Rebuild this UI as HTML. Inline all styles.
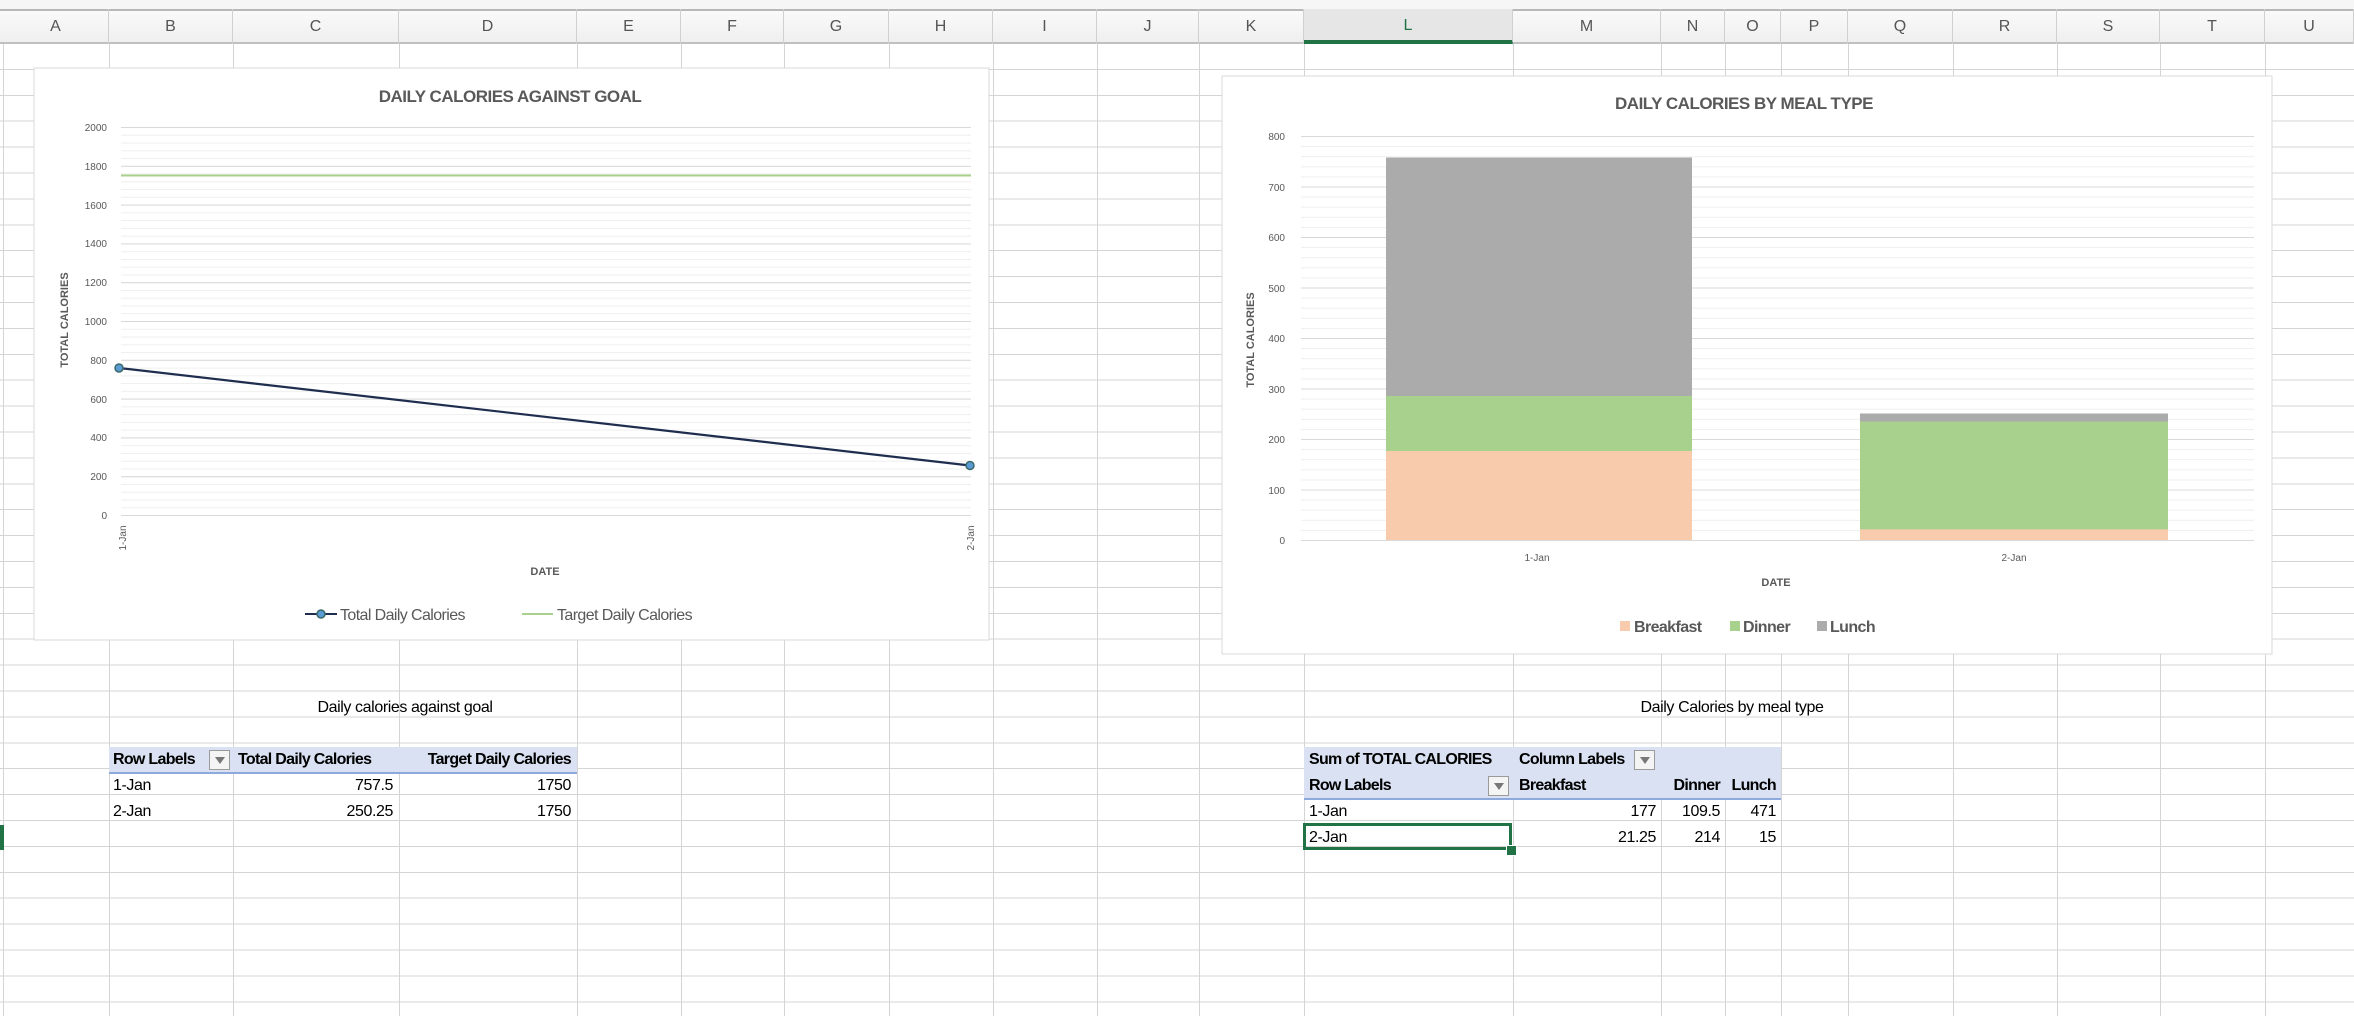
<!DOCTYPE html>
<html><head><meta charset="utf-8"><style>
body{margin:0;width:2354px;height:1016px;overflow:hidden;background:#fff;font-family:"Liberation Sans",sans-serif;position:relative}
.a{position:absolute}
.grid{left:0;top:44px;width:2354px;height:972px;background:repeating-linear-gradient(to bottom,transparent 0,transparent 24.9px,#d4d4d4 24.9px,#d4d4d4 25.9px)}
.vl{position:absolute;top:44px;width:1px;height:972px;background:#d4d4d4}
.hdr{left:0;top:9px;width:2354px;height:35px;background:linear-gradient(#fafafa,#efefef);border-top:2px solid #b8b8b8;border-bottom:2px solid #c0c0c0;box-sizing:border-box}
.ch{position:absolute;top:9px;height:35px;line-height:35px;text-align:center;font-size:16px;color:#555;border-right:1px solid #d0d0d0;box-sizing:border-box}
.c{position:absolute;font-size:16px;letter-spacing:-0.4px;color:#000;height:26px;line-height:26px;white-space:nowrap}
.b{font-weight:bold;letter-spacing:-0.7px}
.r{text-align:right}
.dd{position:absolute;width:21px;height:20px;border:1px solid #9a9a9a;background:#f4f4f4;box-sizing:border-box}
.dd:after{content:"";position:absolute;left:5px;top:6px;border-left:5px solid transparent;border-right:5px solid transparent;border-top:7px solid #777}
</style></head><body>
<div class="a" style="left:0;top:0;width:2354px;height:9px;background:#f6f6f6"></div>
<div class="a hdr"></div>
<div class="ch" style="left:3px;width:106px">A</div>
<div class="ch" style="left:109px;width:124px">B</div>
<div class="ch" style="left:233px;width:166px">C</div>
<div class="ch" style="left:399px;width:178px">D</div>
<div class="ch" style="left:577px;width:104px">E</div>
<div class="ch" style="left:681px;width:103px">F</div>
<div class="ch" style="left:784px;width:105px">G</div>
<div class="ch" style="left:889px;width:104px">H</div>
<div class="ch" style="left:993px;width:104px">I</div>
<div class="ch" style="left:1097px;width:102px">J</div>
<div class="ch" style="left:1199px;width:105px">K</div>
<div class="ch" style="left:1304px;width:209px;background:#e6e6e6;color:#217346;border-bottom:4px solid #217346;line-height:33px">L</div>
<div class="ch" style="left:1513px;width:148px">M</div>
<div class="ch" style="left:1661px;width:64px">N</div>
<div class="ch" style="left:1725px;width:56px">O</div>
<div class="ch" style="left:1781px;width:67px">P</div>
<div class="ch" style="left:1848px;width:105px">Q</div>
<div class="ch" style="left:1953px;width:104px">R</div>
<div class="ch" style="left:2057px;width:103px">S</div>
<div class="ch" style="left:2160px;width:105px">T</div>
<div class="ch" style="left:2265px;width:89px">U</div>
<div class="a grid"></div>
<div class="vl" style="left:3px"></div><div class="vl" style="left:109px"></div><div class="vl" style="left:233px"></div><div class="vl" style="left:399px"></div><div class="vl" style="left:577px"></div><div class="vl" style="left:681px"></div><div class="vl" style="left:784px"></div><div class="vl" style="left:889px"></div><div class="vl" style="left:993px"></div><div class="vl" style="left:1097px"></div><div class="vl" style="left:1199px"></div><div class="vl" style="left:1304px"></div><div class="vl" style="left:1513px"></div><div class="vl" style="left:1661px"></div><div class="vl" style="left:1725px"></div><div class="vl" style="left:1781px"></div><div class="vl" style="left:1848px"></div><div class="vl" style="left:1953px"></div><div class="vl" style="left:2057px"></div><div class="vl" style="left:2160px"></div><div class="vl" style="left:2265px"></div>
<div class="a" style="left:0;top:825px;width:4px;height:25px;background:#217346"></div>

<svg class="a" style="left:0;top:0" width="2354" height="1016" font-family="Liberation Sans, sans-serif">
<defs>
<pattern id="m1" x="0" y="127" width="10" height="7.76" patternUnits="userSpaceOnUse"><rect width="10" height="1" fill="#efefef"/></pattern>
<pattern id="M1" x="0" y="127" width="10" height="38.8" patternUnits="userSpaceOnUse"><rect width="10" height="1" fill="#d9d9d9"/></pattern>
<pattern id="m2" x="0" y="136" width="10" height="10.1" patternUnits="userSpaceOnUse"><rect width="10" height="1" fill="#efefef"/></pattern>
<pattern id="M2" x="0" y="136" width="10" height="50.5" patternUnits="userSpaceOnUse"><rect width="10" height="1" fill="#d9d9d9"/></pattern>
</defs>
<rect x="34" y="68" width="955" height="572" fill="#fff" stroke="#d9d9d9"/>
<text x="510" y="102" text-anchor="middle" font-size="17" font-weight="bold" fill="#595959" letter-spacing="-0.5">DAILY CALORIES AGAINST GOAL</text>
<rect x="121" y="127" width="850" height="389" fill="url(#m1)"/>
<rect x="121" y="127" width="850" height="389" fill="url(#M1)"/>
<g font-size="10" fill="#595959" text-anchor="end">
<text x="107" y="131">2000</text><text x="107" y="170">1800</text><text x="107" y="209">1600</text><text x="107" y="247">1400</text><text x="107" y="286">1200</text><text x="107" y="325">1000</text><text x="107" y="364">800</text><text x="107" y="403">600</text><text x="107" y="441">400</text><text x="107" y="480">200</text><text x="107" y="519">0</text>
</g>
<text transform="translate(68,320) rotate(-90)" text-anchor="middle" font-size="11" font-weight="bold" fill="#595959">TOTAL CALORIES</text>
<line x1="121" y1="175.5" x2="971" y2="175.5" stroke="#a9d18e" stroke-width="2"/>
<line x1="119" y1="368" x2="970" y2="465.5" stroke="#1f2d4e" stroke-width="2.2"/>
<circle cx="119" cy="368" r="4" fill="#5b9bd5" stroke="#3a6a6a" stroke-width="1.5"/>
<circle cx="970" cy="465.5" r="4" fill="#5b9bd5" stroke="#3a6a6a" stroke-width="1.5"/>
<text transform="translate(126,538) rotate(-90)" text-anchor="middle" font-size="10" fill="#595959">1-Jan</text>
<text transform="translate(974,538) rotate(-90)" text-anchor="middle" font-size="10" fill="#595959">2-Jan</text>
<text x="545" y="575" text-anchor="middle" font-size="11" font-weight="bold" fill="#595959">DATE</text>
<line x1="305" y1="614" x2="337" y2="614" stroke="#1f2d4e" stroke-width="2"/>
<circle cx="321" cy="614" r="4" fill="#5b9bd5" stroke="#3a6a6a" stroke-width="1.5"/>
<text x="340" y="620" font-size="16" fill="#595959" letter-spacing="-0.6">Total Daily Calories</text>
<line x1="522" y1="614" x2="553" y2="614" stroke="#a9d18e" stroke-width="2"/>
<text x="557" y="620" font-size="16" fill="#595959" letter-spacing="-0.6">Target Daily Calories</text>
<rect x="1222" y="76" width="1050" height="578" fill="#fff" stroke="#d9d9d9"/>
<text x="1744" y="109" text-anchor="middle" font-size="17" font-weight="bold" fill="#595959" letter-spacing="-0.5">DAILY CALORIES BY MEAL TYPE</text>
<rect x="1301" y="136" width="953" height="405" fill="url(#m2)"/>
<rect x="1301" y="136" width="953" height="405" fill="url(#M2)"/>
<g font-size="10" fill="#595959" text-anchor="end">
<text x="1285" y="140">800</text><text x="1285" y="191">700</text><text x="1285" y="241">600</text><text x="1285" y="292">500</text><text x="1285" y="342">400</text><text x="1285" y="393">300</text><text x="1285" y="443">200</text><text x="1285" y="494">100</text><text x="1285" y="544">0</text>
</g>
<text transform="translate(1254,340) rotate(-90)" text-anchor="middle" font-size="11" font-weight="bold" fill="#595959">TOTAL CALORIES</text>
<rect x="1386" y="157.5" width="306" height="238.5" fill="#ababab"/>
<rect x="1386" y="396" width="306" height="55" fill="#a9d18e"/>
<rect x="1386" y="451" width="306" height="89" fill="#f8cbad"/>
<rect x="1860" y="413.5" width="308" height="8" fill="#ababab"/>
<rect x="1860" y="421.5" width="308" height="108" fill="#a9d18e"/>
<rect x="1860" y="529.3" width="308" height="10.7" fill="#f8cbad"/>
<text x="1537" y="561" text-anchor="middle" font-size="10" fill="#595959">1-Jan</text>
<text x="2014" y="561" text-anchor="middle" font-size="10" fill="#595959">2-Jan</text>
<text x="1776" y="586" text-anchor="middle" font-size="11" font-weight="bold" fill="#595959">DATE</text>
<rect x="1620" y="621" width="10" height="10" fill="#f8cbad"/><text x="1634" y="632" font-size="16" font-weight="bold" fill="#595959" letter-spacing="-0.6">Breakfast</text>
<rect x="1730" y="621" width="10" height="10" fill="#a9d18e"/><text x="1743" y="632" font-size="16" font-weight="bold" fill="#595959" letter-spacing="-0.6">Dinner</text>
<rect x="1817" y="621" width="10" height="10" fill="#ababab"/><text x="1830" y="632" font-size="16" font-weight="bold" fill="#595959" letter-spacing="-0.6">Lunch</text>
</svg>

<div class="c" style="left:233px;top:695px;width:344px;text-align:center">Daily calories against goal</div>
<div class="a" style="left:109px;top:747px;width:468px;height:25px;background:#d9e1f2;border-bottom:2px solid #8ea9db"></div>
<div class="c b" style="left:113px;top:747px">Row Labels</div>
<div class="dd" style="left:209px;top:750px"></div>
<div class="c b" style="left:238px;top:747px">Total Daily Calories</div>
<div class="c b r" style="left:399px;top:747px;width:172px">Target Daily Calories</div>
<div class="c" style="left:113px;top:773px">1-Jan</div>
<div class="c r" style="left:233px;top:773px;width:160px">757.5</div>
<div class="c r" style="left:399px;top:773px;width:172px">1750</div>
<div class="c" style="left:113px;top:799px">2-Jan</div>
<div class="c r" style="left:233px;top:799px;width:160px">250.25</div>
<div class="c r" style="left:399px;top:799px;width:172px">1750</div>
<div class="c" style="left:1625px;top:695px;width:214px;text-align:center">Daily Calories by meal type</div>
<div class="a" style="left:1304px;top:747px;width:477px;height:51px;background:#d9e1f2;border-bottom:2px solid #8ea9db"></div>
<div class="c b" style="left:1309px;top:747px">Sum of TOTAL CALORIES</div>
<div class="c b" style="left:1519px;top:747px">Column Labels</div>
<div class="dd" style="left:1634px;top:750px"></div>
<div class="c b" style="left:1309px;top:773px">Row Labels</div>
<div class="dd" style="left:1488px;top:776px"></div>
<div class="c b" style="left:1519px;top:773px">Breakfast</div>
<div class="c b r" style="left:1661px;top:773px;width:59px">Dinner</div>
<div class="c b r" style="left:1725px;top:773px;width:51px">Lunch</div>
<div class="c" style="left:1309px;top:799px">1-Jan</div>
<div class="c r" style="left:1513px;top:799px;width:143px">177</div>
<div class="c r" style="left:1661px;top:799px;width:59px">109.5</div>
<div class="c r" style="left:1725px;top:799px;width:51px">471</div>
<div class="c" style="left:1309px;top:825px">2-Jan</div>
<div class="c r" style="left:1513px;top:825px;width:143px">21.25</div>
<div class="c r" style="left:1661px;top:825px;width:59px">214</div>
<div class="c r" style="left:1725px;top:825px;width:51px">15</div>
<div class="a" style="left:1303px;top:823px;width:209px;height:27px;border:3px solid #217346;box-sizing:border-box"></div>
<div class="a" style="left:1506px;top:845px;width:9px;height:9px;background:#217346;border:1px solid #fff"></div>
</body></html>
